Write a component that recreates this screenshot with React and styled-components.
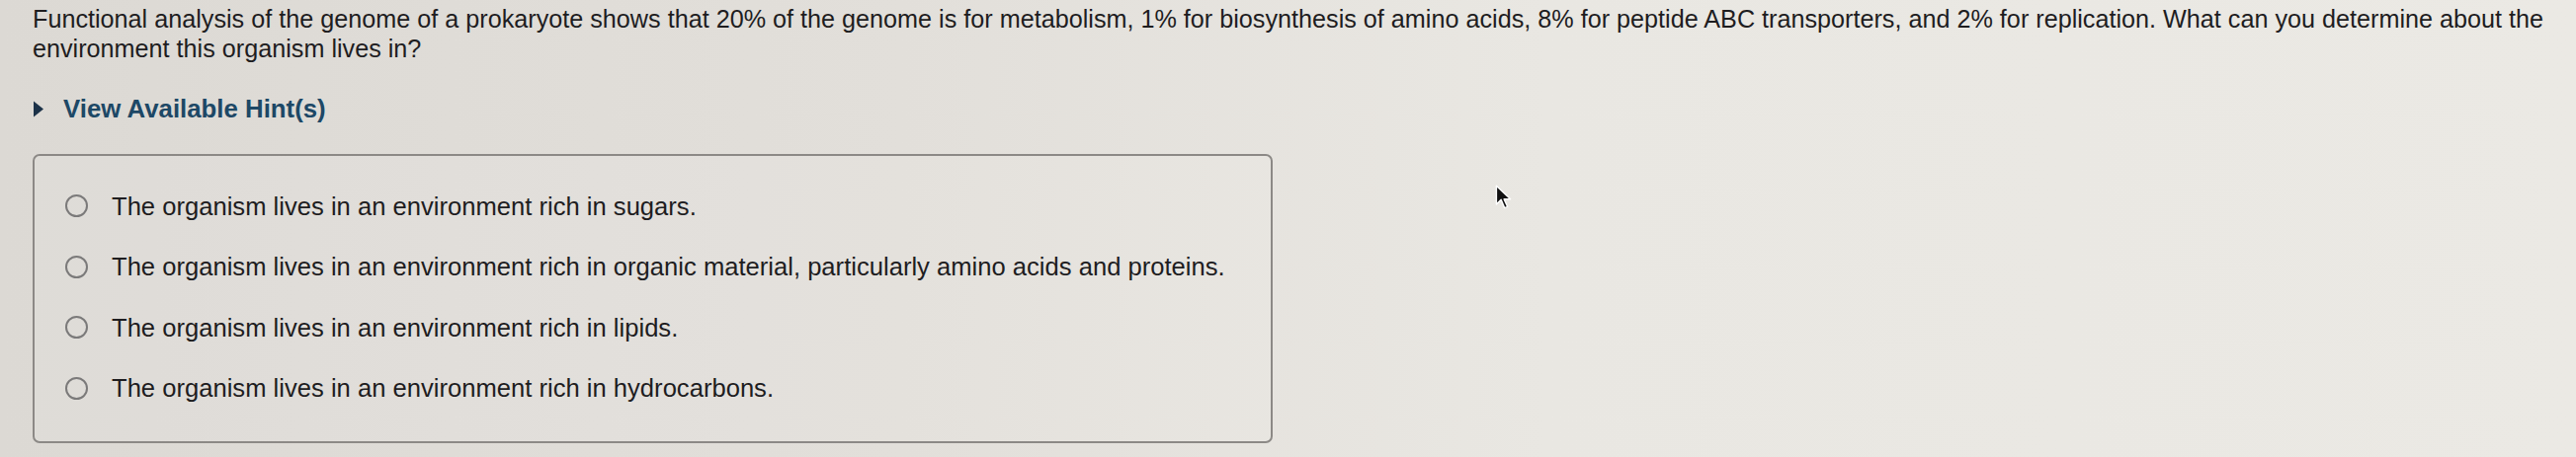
import styled, { createGlobalStyle } from "styled-components";

const GlobalStyle = createGlobalStyle`
  html, body {
    margin: 0;
    padding: 0;
  }
  body {
    width: 2607px;
    height: 463px;
    overflow: hidden;
    background: linear-gradient(90deg, #dcd9d4 0%, #e2dfda 35%, #e9e7e2 60%, #ebe9e4 100%);
    font-family: "Liberation Sans", Arial, sans-serif;
  }
`;

const options = [
  "The organism lives in an environment rich in sugars.",
  "The organism lives in an environment rich in organic material, particularly amino acids and proteins.",
  "The organism lives in an environment rich in lipids.",
  "The organism lives in an environment rich in hydrocarbons.",
];

const App = () => {
  return (
    <Page>
      <GlobalStyle />
      <Question>
        Functional analysis of the genome of a prokaryote shows that 20% of the genome is for
        metabolism, 1% for biosynthesis of amino acids, 8% for peptide ABC transporters, and 2% for
        replication. What can you determine about the environment this organism lives in?
      </Question>
      <HintToggle>
        <Caret viewBox="0 0 12 18">
          <path d="M1 1 L11 9 L1 17 Z" />
        </Caret>
        <span>View Available Hint(s)</span>
      </HintToggle>
      <Choices>
        {options.map((text) => (
          <Choice key={text}>
            <Radio />
            <ChoiceText>{text}</ChoiceText>
          </Choice>
        ))}
      </Choices>
      <Cursor viewBox="0 0 14 22">
        <path
          d="M1 1 L1 17 L5 13 L8 20 L10.5 19 L7.5 12.5 L13 12.5 Z"
          fill="#111"
          stroke="#fff"
          strokeWidth="1.2"
          strokeLinejoin="round"
        />
      </Cursor>
    </Page>
  );
};

const Page = styled.div`
  position: relative;
  padding: 4px 0 0 33px;
  color: #1e1d1f;
`;

const Question = styled.p`
  margin: 0;
  width: 2560px;
  font-size: 25.2px;
  line-height: 30px;
`;

const HintToggle = styled.div`
  display: flex;
  align-items: center;
  gap: 19px;
  margin-top: 31px;
  font-size: 25.8px;
  line-height: 30px;
  font-weight: bold;
  color: #1d4866;
`;

const Caret = styled.svg`
  width: 12px;
  height: 19px;
  fill: #1c3248;
`;

const Choices = styled.div`
  margin-top: 31px;
  width: 1255px;
  box-sizing: border-box;
  padding: 20px 0 23px 31px;
  border: 2px solid #8c8986;
  border-radius: 7px;
  background: rgba(255, 255, 255, 0.08);
  display: flex;
  flex-direction: column;
`;

const Choice = styled.label`
  display: flex;
  align-items: center;
  gap: 24px;
  height: 61.5px;
`;

const Radio = styled.span`
  width: 23px;
  height: 23px;
  box-sizing: border-box;
  border: 2px solid #7b7a7a;
  border-radius: 50%;
  flex-shrink: 0;
`;

const ChoiceText = styled.span`
  font-size: 25.6px;
  line-height: 30px;
`;

const Cursor = styled.svg`
  position: absolute;
  left: 1513px;
  top: 187px;
  width: 17px;
  height: 26px;
`;

export default App;
